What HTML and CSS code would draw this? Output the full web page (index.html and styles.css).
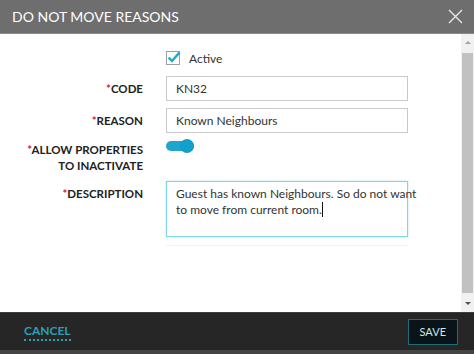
FILE: index.html
```html
<!doctype html>
<html>
    <head>
        <title>Do not move reasons</title>
        <link rel="stylesheet" href="styles.css">
    </head>
    <body>
        <div class="dialog">
            <div class="dialogHeader">
                <div class="title">DO NOT MOVE REASONS</div>
                <a class="close" href="#" title="Close">
                    <svg width="15" height="15" viewBox="0 0 15 15"><path d="M1 1 L14 14 M14 1 L1 14" stroke="#e8e8e8" stroke-width="1.4" fill="none"/></svg>
                </a>
            </div>

            <div class="dialogBody">
                <div class="panel">
                    <form class="reasonForm">
                        <div class="label"></div>
                        <div class="field checkRow">
                            <span class="checkbox">
                                <svg width="16" height="16" viewBox="0 0 16 16"><path d="M2.6 7.6 L6 11 L13.6 2.4" stroke="#22a9c8" stroke-width="2.4" fill="none"/></svg>
                            </span>
                            <span class="checkLabel">Active</span>
                        </div>

                        <div class="label"><span class="req">*</span>CODE</div>
                        <div class="field"><input type="text" class="textInput" value="KN32"></div>

                        <div class="label"><span class="req">*</span>REASON</div>
                        <div class="field"><input type="text" class="textInput" value="Known Neighbours"></div>

                        <div class="label labelTall"><span class="req">*</span>ALLOW PROPERTIES<br>TO INACTIVATE</div>
                        <div class="field"><span class="toggle on"><span class="knob"></span></span></div>

                        <div class="label labelTop"><span class="req">*</span>DESCRIPTION</div>
                        <div class="field descField">
                            <div class="textArea"><span class="line">Guest has known Neighbours. So do not want</span><br><span class="line">to move from current room.<span class="caret"></span></span></div>
                        </div>
                    </form>
                </div>
                <div class="scrollbar">
                    <div class="arrow up"></div>
                    <div class="track"><div class="thumb"></div></div>
                    <div class="arrow down"></div>
                </div>
            </div>

            <div class="dialogFooter">
                <a href="#" class="cancel">CANCEL</a>
                <button type="button" class="btnSave">SAVE</button>
            </div>
        </div>
    </body>
</html>
```

FILE: styles.css
```css
html, body {
  margin: 0;
  height: 100%;
  overflow: hidden;
}

body {
  font-family: Lato, "Open Sans", Arial, sans-serif;
  color: #222;
  background: #fff;
}

.dialog {
  display: flex;
  flex-direction: column;
  height: 354px;
}

/* Header */
.dialogHeader {
  height: 33px;
  display: flex;
  align-items: center;
  justify-content: space-between;
  padding: 0 12px;
  background-color: #6e6e6e;
  border-bottom: 1px solid #8a8a8a;
}

.dialogHeader .title {
  color: #fff;
  font-size: 14px;
}

.dialogHeader .close {
  display: flex;
  margin-right: -1px;
}

/* Body */
.dialogBody {
  flex: 1;
  display: flex;
  min-height: 0;
}

.panel {
  flex: 1;
}

.reasonForm {
  display: grid;
  grid-template-columns: 143px 242px;
  column-gap: 23px;
  row-gap: 7px;
  align-items: center;
  margin: 0;
  padding-top: 16px;
}

.label {
  text-align: right;
  font-size: 11.5px;
  font-weight: bold;
  color: #222;
  line-height: 16px;
}

.labelTop {
  align-self: start;
  padding-top: 5px;
}

.req {
  color: #e0203a;
}

.checkRow {
  display: flex;
  align-items: center;
  height: 16px;
  margin-bottom: 3px;
}

.checkbox {
  position: relative;
  width: 14px;
  height: 14px;
  box-sizing: border-box;
  border: 1px solid #a0a0a0;
  background: #fff;
}

.checkbox svg {
  position: absolute;
  left: -1px;
  top: -2px;
}

.checkLabel {
  margin-left: 9px;
  font-size: 12px;
  color: #333;
}

.textInput {
  display: block;
  width: 100%;
  box-sizing: border-box;
  height: 25px;
  padding: 0 9px;
  border: 1px solid #c9c9c9;
  font: 12px Lato, Arial, sans-serif;
  color: #333;
}

.labelTall {
  padding-top: 2px;
}

.field .toggle {
  margin-top: -16px;
}

.toggle {
  display: block;
  position: relative;
  width: 28px;
  height: 10px;
  border-radius: 5px;
  background: #1fa6cf;
}

.toggle .knob {
  position: absolute;
  right: 0;
  top: -2px;
  width: 14px;
  height: 14px;
  border-radius: 50%;
  background: #139fcc;
}

.descField {
  align-self: start;
  padding-bottom: 8px;
  border-bottom: 1px solid #f2f2f2;
}

.textArea {
  box-sizing: border-box;
  height: 56px;
  padding: 4px 2px 4px 9px;
  border: 1px solid #7fd6ea;
  box-shadow: 0 0 2px #a9e6f3;
  font-size: 12px;
  line-height: 16px;
  color: #333;
}

.textArea .line {
  white-space: nowrap;
}

.caret {
  display: inline-block;
  width: 1px;
  height: 15px;
  background: #111;
  vertical-align: -3px;
}

/* Scrollbar */
.scrollbar {
  width: 13px;
  display: flex;
  flex-direction: column;
  background: #f1f1f1;
}

.scrollbar .arrow {
  height: 17px;
  display: flex;
  align-items: center;
  justify-content: center;
}

.scrollbar .arrow:after {
  content: "";
  border-left: 3px solid transparent;
  border-right: 3px solid transparent;
}

.scrollbar .up:after {
  border-bottom: 3px solid #a3a3a3;
}

.scrollbar .down:after {
  border-top: 3px solid #505050;
}

.scrollbar .track {
  flex: 1;
  display: flex;
  padding: 2px 1px;
}

.scrollbar .thumb {
  flex: 1;
  background: #c1c1c1;
}

/* Footer */
.dialogFooter {
  height: 37px;
  display: flex;
  align-items: center;
  justify-content: space-between;
  padding: 0 16px 0 24px;
  background-color: #262626;
  border-top: 1px solid #3d3d3d;
  border-bottom: 4px solid #444;
}

.cancel {
  color: #2d9fb3;
  font-size: 12px;
  font-weight: bold;
  text-decoration: none;
  border-bottom: 2px dotted #2d9fb3;
  padding-bottom: 1px;
}

.btnSave {
  height: 26px;
  padding: 0 11px;
  background: #0a1418;
  border: 1px solid #1f6d78;
  color: #cfe6ea;
  font: 11px Lato, Arial, sans-serif;
  cursor: pointer;
}
```
